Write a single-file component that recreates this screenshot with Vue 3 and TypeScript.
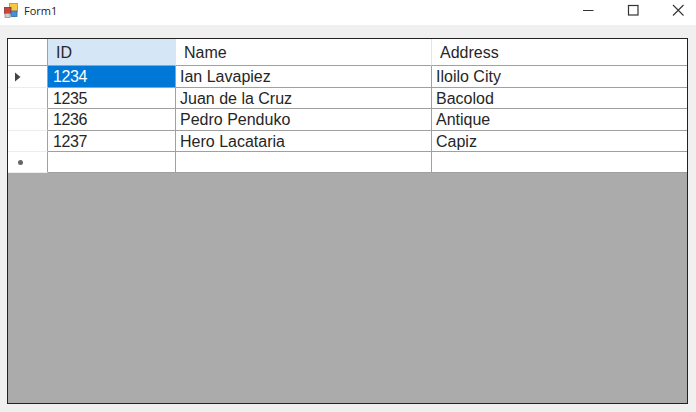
<script setup lang="ts">
interface Row { id: string; name: string; address: string; h: number }
const rows: Row[] = [
  { id: '1234', name: 'Ian Lavapiez', address: 'Iloilo City', h: 22 },
  { id: '1235', name: 'Juan de la Cruz', address: 'Bacolod', h: 21 },
  { id: '1236', name: 'Pedro Penduko', address: 'Antique', h: 22 },
  { id: '1237', name: 'Hero Lacataria', address: 'Capiz', h: 21 },
  { id: '', name: '', address: '', h: 21 },
]
</script>

<template>
  <div class="window">
    <div class="titlebar">
      <div class="title-left">
        <svg class="app-icon" width="14" height="15" viewBox="0 0 14 15">
          <rect x="5.5" y="0.5" width="8" height="8" fill="#f3c843" stroke="#b98f2a" stroke-width="0.8" />
          <rect x="0.5" y="4.5" width="6.5" height="6" fill="#c9453a" stroke="#8e2f28" stroke-width="0.8" />
          <rect x="7" y="8" width="6" height="5.5" fill="#4a8fdc" stroke="#2f65a8" stroke-width="0.8" />
          <rect x="1" y="10.5" width="5" height="4" fill="#cfcfcf" stroke="#8f8f8f" stroke-width="0.8" />
        </svg>
        <span class="title">Form1</span>
      </div>
      <div class="controls">
        <svg class="ctl" width="45" height="20" viewBox="0 0 45 20">
          <path d="M18 10.5h10.5" stroke="#333" stroke-width="1" fill="none" />
        </svg>
        <svg class="ctl" width="45" height="20" viewBox="0 0 45 20">
          <rect x="18.5" y="5.5" width="9.5" height="9.5" stroke="#333" stroke-width="1.2" fill="none" />
        </svg>
        <svg class="ctl" width="45" height="20" viewBox="0 0 45 20">
          <path d="M18 5l10.5 10.5M28.5 5L18 15.5" stroke="#333" stroke-width="1.1" fill="none" />
        </svg>
      </div>
    </div>
    <div class="client">
      <div class="grid">
        <div class="row header">
          <div class="rowhead"></div>
          <div class="cell col-id selected-head">ID</div>
          <div class="cell col-name">Name</div>
          <div class="cell col-addr">Address</div>
        </div>
        <div
          v-for="(r, i) in rows"
          :key="i"
          class="row"
          :style="{ height: r.h + 'px' }"
        >
          <div class="rowhead">
            <svg v-if="i === 0" width="6" height="10" viewBox="0 0 6 10">
              <path d="M0 0.5l5.5 4.5-5.5 4.5z" fill="#444" />
            </svg>
            <span v-if="i === 4" class="dot"></span>
          </div>
          <div class="cell col-id num" :class="{ selected: i === 0 }">{{ r.id }}</div>
          <div class="cell col-name">{{ r.name }}</div>
          <div class="cell col-addr">{{ r.address }}</div>
        </div>
      </div>
    </div>
  </div>
</template>

<style>
html, body { margin: 0; padding: 0; }
</style>

<style scoped>
.window {
  width: 696px;
  height: 412px;
  background: #f0f0f0;
  display: flex;
  flex-direction: column;
  font-family: "Liberation Sans", Arial, sans-serif;
  overflow: hidden;
}
.titlebar {
  height: 25px;
  background: #fff;
  display: flex;
  justify-content: space-between;
  align-items: flex-start;
  flex: none;
}
.title-left {
  display: flex;
  align-items: center;
  padding: 3px 0 0 4px;
  gap: 6px;
}
.title {
  font: 11px "Open Sans", "Liberation Sans", sans-serif;
  color: #222;
  margin-top: -1px;
}
.controls {
  display: flex;
  margin-right: -4px;
}
.ctl { display: block; }
.client {
  flex: 1;
  padding: 13px 8px 8px 7px;
  display: flex;
  min-height: 0;
}
.grid {
  flex: 1;
  border: 1px solid #222;
  background: #ababab;
  box-sizing: border-box;
  display: flex;
  flex-direction: column;
}
.row {
  display: flex;
  flex: none;
  box-sizing: border-box;
  background: #fff;
  font-size: 16px;
  color: #262626;
}
.row.header {
  height: 27px;
}
.row:nth-child(odd) .cell {
  padding-top: 1px;
}
.rowhead {
  width: 40px;
  flex: none;
  background: #fff;
  border-right: 1px solid #a0a0a0;
  border-bottom: 1px solid #ececec;
  box-sizing: border-box;
  display: flex;
  align-items: center;
  padding-left: 7px;
}
.header .rowhead {
  border-bottom-color: #a0a0a0;
}
.cell {
  box-sizing: border-box;
  border-right: 1px solid #a0a0a0;
  border-bottom: 1px solid #a0a0a0;
  padding-left: 4px;
  display: flex;
  align-items: center;
  white-space: nowrap;
}
.cell.col-id {
  padding-left: 5px;
}
.num {
  letter-spacing: -0.4px;
}
.header .cell {
  padding-left: 8px;
  border-right-color: #e4e4e4;
}
.col-id { width: 128px; }
.col-name { width: 256px; }
.col-addr { flex: 1; border-right: none; }
.selected-head { background: #d5e6f6; }
.selected { background: #0078d7; color: #fff; }
.dot {
  display: block;
  width: 5px;
  height: 5px;
  margin: 1px 0 0 3px;
  border-radius: 50%;
  background: #666;
}
</style>
